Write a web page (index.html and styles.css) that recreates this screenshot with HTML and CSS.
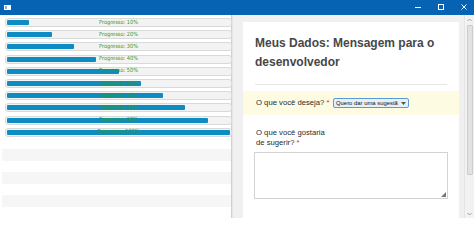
FILE: index.html
```html
<!DOCTYPE html>
<html lang="pt">
<head>
<meta charset="utf-8">
<title>Meus Dados</title>
<link rel="stylesheet" href="styles.css">
</head>
<body>
<div class="window">
  <header class="titlebar">
    <div class="app-icon"><span class="app-icon-inner"></span></div>
    <div class="controls">
      <svg class="ctl" width="14" height="15" viewBox="0 0 14 15"><path d="M4 7.5h6" stroke="#fff" stroke-width="1"/></svg>
      <svg class="ctl" width="14" height="15" viewBox="0 0 14 15"><rect x="4.5" y="4.5" width="5" height="5" fill="none" stroke="#fff" stroke-width="1"/></svg>
      <svg class="ctl" width="14" height="15" viewBox="0 0 14 15"><path d="M4.5 4.5l5 5M9.5 4.5l-5 5" stroke="#fff" stroke-width="1"/></svg>
    </div>
  </header>
  <div class="main">
    <section class="left">
      <div class="bars">
        <div class="bar"><div class="fill" style="width:10%"></div><span class="label">Progresso: 10%</span></div>
        <div class="bar"><div class="fill" style="width:20%"></div><span class="label">Progresso: 20%</span></div>
        <div class="bar"><div class="fill" style="width:30%"></div><span class="label">Progresso: 30%</span></div>
        <div class="bar"><div class="fill" style="width:40%"></div><span class="label">Progresso: 40%</span></div>
        <div class="bar"><div class="fill" style="width:50%"></div><span class="label">Progresso: 50%</span></div>
        <div class="bar"><div class="fill" style="width:60%"></div><span class="label">Progresso: 60%</span></div>
        <div class="bar"><div class="fill" style="width:70%"></div><span class="label">Progresso: 70%</span></div>
        <div class="bar"><div class="fill" style="width:80%"></div><span class="label">Progresso: 80%</span></div>
        <div class="bar"><div class="fill" style="width:90%"></div><span class="label">Progresso: 90%</span></div>
        <div class="bar"><div class="fill" style="width:100%"></div><span class="label">Progresso: 100%</span></div>
      </div>
      <div class="list">
        <div class="row"></div><div class="row alt"></div>
        <div class="row"></div><div class="row alt"></div>
        <div class="row"></div><div class="row alt"></div>
        <div class="row"></div>
      </div>
    </section>
    <section class="right">
      <div class="viewport">
        <div class="card">
          <div class="head">
            <h1 class="title">Meus Dados: Mensagem para o desenvolvedor</h1>
            <div class="rule"></div>
          </div>
          <div class="field highlight">
            <div class="flabel"><span>O que você deseja?</span> <span class="req">*</span></div>
            <div class="select">
              <span class="select-text">Quero dar uma sugestã</span>
              <svg class="caret" width="5" height="3" viewBox="0 0 5 3"><path d="M0 0h5L2.5 3z" fill="#555"/></svg>
            </div>
          </div>
          <div class="field stacked">
            <div class="flabel">
              <span class="line">O que você gostaria</span>
              <span class="line"><span>de sugerir?</span> <span class="req">*</span></span>
            </div>
            <div class="textarea">
              <svg class="grip" width="5" height="5" viewBox="0 0 5 5"><path d="M5 0V5H0z" fill="#777"/></svg>
            </div>
          </div>
        </div>
      </div>
      <div class="scrollbar">
        <svg class="arrow" width="9" height="6" viewBox="0 0 9 6"><path d="M2.5 4L4.5 2L6.5 4" fill="none" stroke="#a0a0a0" stroke-width="1"/></svg>
        <div class="thumb"></div>
        <div class="track-rest"></div>
        <svg class="arrow" width="9" height="6" viewBox="0 0 9 6"><path d="M2.5 2L4.5 4L6.5 2" fill="none" stroke="#a0a0a0" stroke-width="1"/></svg>
      </div>
    </section>
  </div>
</div>
</body>
</html>
```
FILE: styles.css
```css
* { box-sizing: border-box; }
html, body { margin: 0; padding: 0; }
body {
  width: 474px;
  height: 218px;
  overflow: hidden;
  font-family: "Liberation Sans", Arial, sans-serif;
  background: #fff;
}
.window { display: flex; flex-direction: column; width: 474px; height: 218px; }

.titlebar {
  height: 15px;
  flex: none;
  background: #0663b4;
  display: flex;
  align-items: center;
  justify-content: space-between;
  padding-left: 4px;
}
.app-icon {
  width: 7px;
  height: 5px;
  background: #fff;
  display: flex;
  padding: 1px;
}
.app-icon-inner { width: 2px; background: #8fb0d2; }
.controls { display: flex; gap: 9px; padding-right: 3px; }
.ctl { display: block; }

.main { flex: 1; display: flex; min-height: 0; }

.left {
  width: 232px;
  flex: none;
  border-right: 1px solid #d0d0d0;
  display: flex;
  flex-direction: column;
  background: #fff;
}
.bars {
  display: flex;
  flex-direction: column;
  gap: 3.2px;
  padding: 3px 0 0 5px;
}
.bar {
  position: relative;
  width: 227px;
  height: 9px;
  border: 1px solid #d9d9d9;
  border-radius: 3px;
  background: #f3f3f3;
  padding: 1px;
}
.fill {
  height: 5px;
  background: #0d8cc4;
  border-radius: 1px;
}
.label {
  position: absolute;
  left: 0;
  right: 0;
  top: 0;
  bottom: 0;
  display: flex;
  align-items: center;
  justify-content: center;
  font-family: "DejaVu Sans Condensed", "DejaVu Sans", sans-serif;
  font-size: 5.6px;
  color: #2e9a34;
  line-height: 1;
  white-space: nowrap;
}
.list {
  margin: 1px 0 0 2px;
  display: flex;
  flex-direction: column;
}
.row { height: 11.5px; }
.row.alt { background: #f6f6f6; }

.right {
  flex: 1;
  display: flex;
  background: #f0f0f0;
  border-left: 1px solid #e6e6e6;
  min-width: 0;
}
.viewport {
  flex: 1;
  padding: 7px 5px 0 10px;
  overflow: hidden;
}
.card {
  background: #fff;
  height: 100%;
  display: flex;
  flex-direction: column;
}
.head { padding: 12px 12px 0 12px; }
.title {
  margin: 0;
  font-size: 12px;
  line-height: 19px;
  font-weight: bold;
  color: #474747;
}
.rule {
  height: 1px;
  background: #e6e6e6;
  margin-top: 12px;
}
.field {
  display: flex;
  padding: 0 12px 0 13px;
}
.highlight {
  margin-top: 6px;
  height: 24px;
  align-items: center;
  background: #fdfbe1;
}
.flabel {
  width: 77px;
  flex: none;
  font-size: 7.7px;
  line-height: 10px;
  color: #2b2b2b;
}
.line { display: block; }
.req { color: #e03030; }
.select {
  width: 76px;
  height: 10px;
  border: 1px solid #5a9bd5;
  border-radius: 2px;
  background: #e5f0fb;
  display: flex;
  align-items: center;
  gap: 2px;
  padding: 0 2px 0 2px;
}
.select-text {
  font-size: 5.9px;
  color: #111;
  white-space: nowrap;
}
.caret { flex: none; display: block; margin-left: auto; }
.stacked {
  flex-direction: column;
  padding: 0 11px 0 11px;
  margin-top: 13px;
}
.stacked .flabel { padding-left: 2px; }
.textarea {
  position: relative;
  margin-top: 4px;
  height: 47px;
  border: 1px solid #d3d3d3;
  background: #fff;
}
.grip { position: absolute; right: 1px; bottom: 1px; }

.scrollbar {
  width: 10px;
  flex: none;
  display: flex;
  flex-direction: column;
  align-items: center;
  background: #f2f2f2;
  border-left: 1px solid #e4e4e4;
  padding: 2px 0 1px;
}
.arrow { display: block; flex: none; }
.thumb {
  width: 6px;
  height: 150px;
  margin-top: 2px;
  background: #e2e2e2;
  border: 1px solid #cccccc;
  border-radius: 1px;
  flex: none;
}
.track-rest { flex: 1; }
```
